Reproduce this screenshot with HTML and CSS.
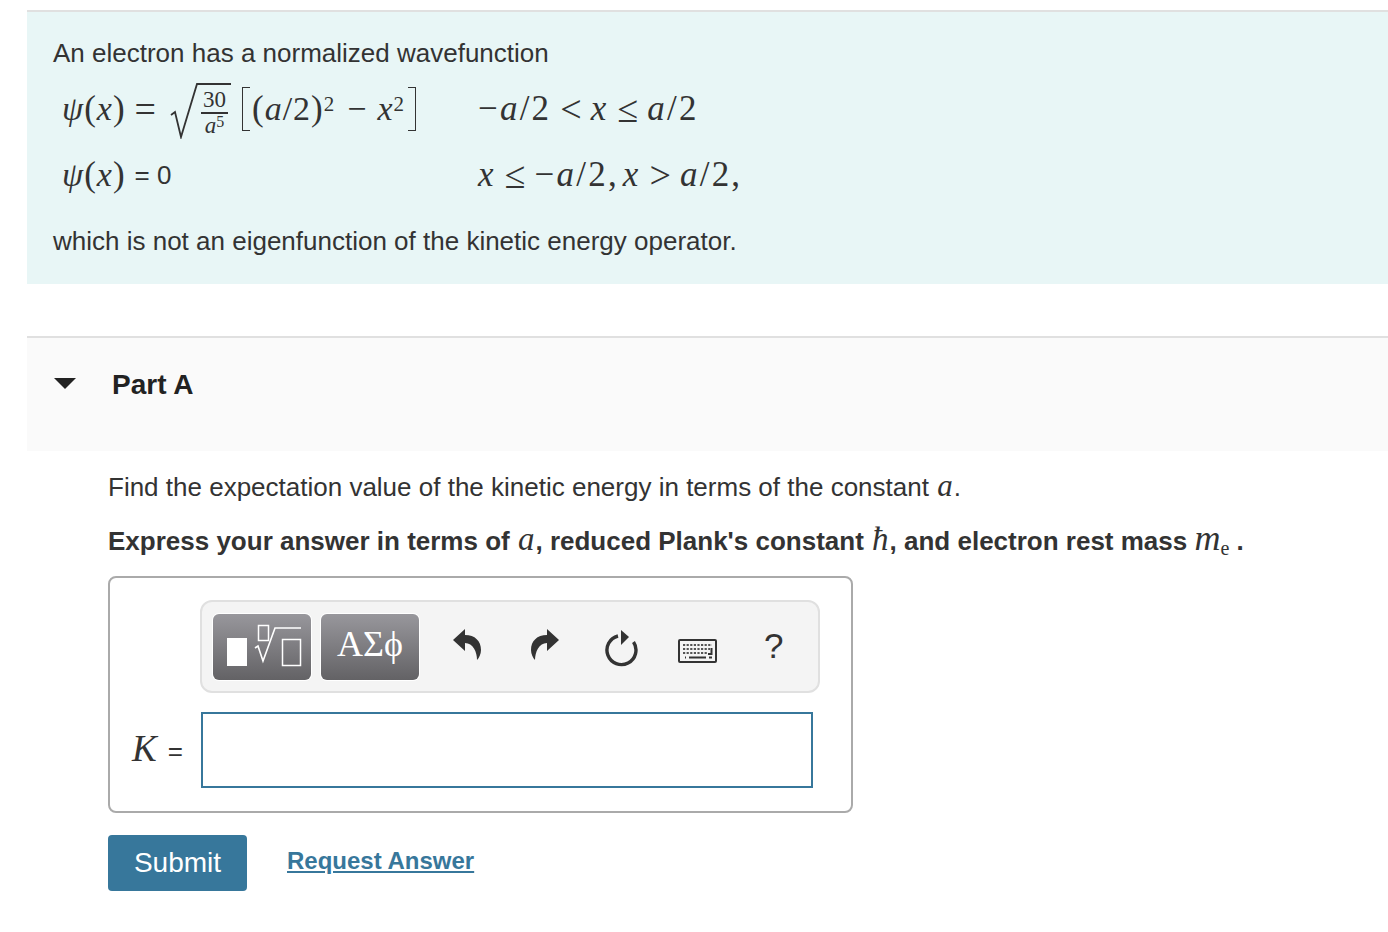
FILE: index.html
```html
<!DOCTYPE html>
<html lang="en">
<head>
    <meta charset="UTF-8">
    <meta name="viewport" content="width=device-width, initial-scale=1.0">
    <title>Part A</title>
    <link rel="stylesheet" href="styles.css">
</head>
<body>
    <div class="intro">
        <p class="intro-text">An electron has a normalized wavefunction</p>
        <div class="eq-row eq-first">
            <div class="eq-left math">
                <i>&psi;</i><span class="paren">(</span><i>x</i><span class="paren">)</span><span class="rel">=</span>
                <svg class="radical" width="28" height="56" viewBox="0 0 28 56"><path d="M1 32 L5 29 L11 54 L27 1 L28 1" fill="none" stroke="#333" stroke-width="1.8"/></svg><span class="root"><span class="frac"><span class="num">30</span><span class="den"><i>a</i><sup>5</sup></span></span></span>
                <span class="bracket bracket-l"></span><span class="paren">(</span><i>a</i>/2<span class="paren">)</span><sup>2</sup><span class="minus">&minus;</span><i>x</i><sup>2</sup><span class="bracket bracket-r"></span>
            </div>
            <div class="eq-right math">&minus;<i>a</i>/2<span class="rel-s">&lt;</span><i>x</i><span class="rel-s">&le;</span><i>a</i>/2</div>
        </div>
        <div class="eq-row eq-second">
            <div class="eq-left math"><i>&psi;</i><span class="paren">(</span><i>x</i><span class="paren">)</span><span class="zero">= 0</span></div>
            <div class="eq-right math"><i>x</i><span class="rel-s">&le;</span>&minus;<i>a</i>/2,<i class="after-comma">x</i><span class="rel-s">&gt;</span><i>a</i>/2,</div>
        </div>
        <p class="intro-text intro-end">which is not an eigenfunction of the kinetic energy operator.</p>
    </div>

    <div class="part-head">
        <span class="caret"></span>
        <h2>Part A</h2>
    </div>

    <div class="part-body">
        <p class="question">Find the expectation value of the kinetic energy in terms of the constant <i class="var">a</i>.</p>
        <p class="instruction">Express your answer in terms of <i class="var">a</i>, reduced Plank's constant <i class="var">&#295;</i>, and electron rest mass <i class="var var-m">m</i><span class="sub">e</span> .</p>

        <div class="answer-box">
            <div class="toolbar">
                <button class="tool-btn tool-templates" type="button">
                    <svg width="98" height="66" viewBox="0 0 98 66">
                        <rect x="14" y="24" width="20" height="28" fill="#fff"/>
                        <rect x="45.5" y="11.5" width="10" height="15" fill="none" stroke="#fff" stroke-width="1.5"/>
                        <path d="M42 34 L45 32 L50 47 L62 14 H88" fill="none" stroke="#fff" stroke-width="1.6"/>
                        <rect x="69.5" y="25.5" width="18" height="26" fill="none" stroke="#fff" stroke-width="1.5"/>
                    </svg>
                </button>
                <button class="tool-btn tool-symbols" type="button">&Alpha;&Sigma;&straightphi;</button>
                <svg class="tool-icon icon-undo" width="28" height="32" viewBox="0 0 28 32"><path d="M0 12 L12 1 V7 C22 7 28 13 28 22 C28 26 26 30 24 32 C24 24 20 15 12 15 V23 Z" fill="#333"/></svg>
                <svg class="tool-icon icon-redo" width="28" height="32" viewBox="0 0 28 32"><path d="M28 12 L16 1 V7 C6 7 0 13 0 22 C0 26 2 30 4 32 C4 24 8 15 16 15 V23 Z" fill="#333"/></svg>
                <svg class="tool-icon icon-reset" width="34" height="38" viewBox="0 0 34 38"><path d="M29.5 13 A14.5 14.5 0 1 1 14 7" fill="none" stroke="#333" stroke-width="3.4"/><path d="M17 1 L25 8 L17 16 Z" fill="#333"/></svg>
                <svg class="tool-icon icon-keys" width="39" height="24" viewBox="0 0 39 24">
                    <rect x="1" y="1" width="37" height="22" rx="1" fill="none" stroke="#333" stroke-width="2"/>
                    <path d="M5 6 H34 M5 10 H32 M5 14 H29" stroke="#555" stroke-width="2" stroke-dasharray="2.2 1.4"/>
                    <path d="M7 18.500 H8 M11 18.500 H28 M31 18.500 H34 M33.500 9 V15 H30" fill="none" stroke="#333" stroke-width="2"/>
                </svg>
                <span class="tool-help">?</span>
            </div>
            <div class="answer-row">
                <label class="answer-label"><i>K</i><span class="label-eq">=</span></label>
                <input class="answer-input" type="text">
            </div>
        </div>

        <div class="actions">
            <button class="submit-btn" type="button">Submit</button>
            <a class="request-link" href="#">Request Answer</a>
        </div>
    </div>
</body>
</html>
```

FILE: styles.css
```css
body {
    font-family: "Liberation Sans", Arial, sans-serif;
    margin: 0;
    padding: 10px 0 0 27px;
    background: #fff;
    color: #333;
    overflow: hidden;
}
p {
    margin: 0;
}
.math {
    font-family: "Liberation Serif", serif;
    font-size: 34px;
    line-height: 40px;
    display: flex;
    align-items: center;
    white-space: pre;
}
.intro {
    height: 272px;
    border-top: 2px solid #e0e0e0;
    background: #e8f6f6;
    padding-left: 26px;
}
.intro-text {
    font-size: 26px;
    line-height: 32px;
    padding-top: 25px;
}
.intro-end {
    padding-top: 28px;
}
.eq-row {
    display: grid;
    grid-template-columns: 416px 1fr;
    padding-left: 9px;
}
.eq-first {
    height: 66px;
    margin-top: 7px;
    align-items: center;
}
.eq-second {
    height: 44px;
    margin-top: 11px;
    align-items: center;
}
.eq-left {
    letter-spacing: 1px;
}
.eq-right {
    font-size: 35px;
    letter-spacing: 2.2px;
}
.paren {
    font-size: 35px;
}
.rel {
    margin: 0 9px;
    font-size: 38px;
}
.rel-s {
    margin: 0 9px;
    font-size: 38px;
    letter-spacing: 0;
}
.after-comma {
    margin-left: 4px;
}
.minus {
    margin: 0 10px 0 12px;
}
sup {
    font-size: 21px;
    line-height: 1;
    align-self: flex-start;
    margin-top: 14px;
}
.den sup {
    font-size: 16px;
    margin-top: 0;
}
.radical {
    margin: 3px 0 0 4px;
    flex: none;
}
.root {
    border-top: 2px solid #333;
    height: 54px;
    margin-top: 1px;
    margin-right: 11px;
    display: flex;
    justify-content: center;
    padding: 3px 3px 0 3px;
    box-sizing: border-box;
}
.frac {
    display: inline-flex;
    flex-direction: column;
    align-items: center;
    font-size: 23px;
    line-height: 23px;
    letter-spacing: 0;
}
.num {
    border-bottom: 2px solid #333;
    padding: 0 2px 1px;
}
.den {
    display: flex;
    line-height: 24px;
}
.bracket {
    width: 7px;
    height: 42px;
    border: 1.5px solid #333;
}
.bracket-l {
    border-right: none;
    margin-right: 2px;
}
.bracket-r {
    border-left: none;
    margin-left: 3px;
}
.zero {
    font-family: "Liberation Sans", Arial, sans-serif;
    font-size: 26px;
    letter-spacing: 0;
    margin-left: 9px;
}
.part-head {
    height: 113px;
    margin-top: 52px;
    border-top: 2px solid #e0e0e0;
    background: #fafafa;
    display: flex;
    align-items: flex-start;
}
.caret {
    width: 0;
    height: 0;
    margin: 40px 0 0 27px;
    border-left: 11px solid transparent;
    border-right: 11px solid transparent;
    border-top: 11px solid #222;
}
h2 {
    margin: 29px 0 0 36px;
    font-size: 28px;
    line-height: 36px;
    color: #222;
}
.part-body {
    padding-left: 81px;
}
.var {
    font-family: "Liberation Serif", serif;
    font-size: 33px;
    font-weight: normal;
    line-height: 0;
    margin: 0 1px;
}
.question .var {
    font-size: 31px;
}
.var-m {
    font-size: 36px;
    margin: 0;
}
.sub {
    font-family: "Liberation Serif", serif;
    font-size: 20px;
    font-weight: normal;
    vertical-align: -5px;
    line-height: 0;
}
.question {
    font-size: 26px;
    line-height: 32px;
    margin-top: 20px;
}
.instruction {
    font-size: 26px;
    line-height: 32px;
    font-weight: bold;
    margin-top: 22px;
}
.answer-box {
    width: 741px;
    height: 233px;
    margin-top: 19px;
    border: 2px solid #aaa;
    border-radius: 8px;
}
.toolbar {
    width: 620px;
    height: 93px;
    box-sizing: border-box;
    margin: 22px 0 0 90px;
    border: 2px solid #e0e0e0;
    border-radius: 12px;
    background: #f4f4f4;
    display: flex;
    align-items: center;
    padding-left: 11px;
}
.tool-btn {
    height: 66px;
    border: none;
    border-radius: 6px;
    background: linear-gradient(#98979c, #636265);
    box-shadow: 0 0 0 1px #fff;
    color: #fff;
    padding: 0;
    display: flex;
    align-items: center;
    justify-content: center;
}
.tool-templates {
    width: 98px;
}
.tool-symbols {
    width: 98px;
    margin-left: 10px;
    padding-bottom: 5px;
    font-family: "Liberation Serif", "DejaVu Serif", serif;
    font-size: 36px;
}
.icon-undo {
    margin: -6px 0 0 34px;
}
.icon-redo {
    margin: -6px 0 0 50px;
}
.icon-reset {
    margin: 2px 0 0 45px;
}
.icon-keys {
    margin: 9px 0 0 40px;
}
.tool-help {
    margin: -2px 0 0 47px;
    font-size: 35px;
}
.answer-row {
    display: flex;
    align-items: center;
    margin-top: 19px;
}
.answer-label {
    width: 91px;
    padding: 0 0 2px 22px;
    box-sizing: border-box;
    display: flex;
    align-items: center;
}
.answer-label i {
    font-family: "Liberation Serif", serif;
    font-size: 37px;
    line-height: 40px;
}
.label-eq {
    font-size: 26px;
    margin: 4px 0 0 11px;
}
.answer-input {
    width: 612px;
    height: 76px;
    box-sizing: border-box;
    border: 2px solid #37779b;
    background: #fff;
    padding: 0;
}
.actions {
    display: flex;
    align-items: flex-start;
    margin-top: 22px;
}
.submit-btn {
    width: 139px;
    height: 56px;
    border: none;
    border-radius: 4px;
    background: #37779b;
    color: #fff;
    font-family: "Liberation Sans", Arial, sans-serif;
    font-size: 28px;
    padding: 0;
}
.request-link {
    margin: 10px 0 0 40px;
    font-size: 24px;
    line-height: 32px;
    font-weight: bold;
    color: #37779b;
}
```
